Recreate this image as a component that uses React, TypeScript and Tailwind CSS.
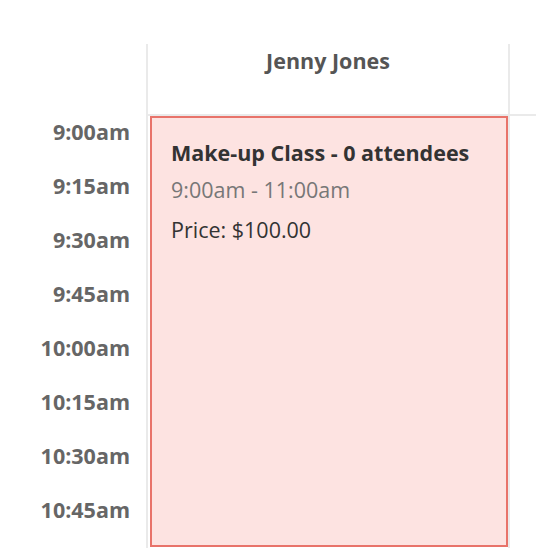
import React from "react";

const times = ["9:00am", "9:15am", "9:30am", "9:45am", "10:00am", "10:15am", "10:30am", "10:45am"];

export default function App() {
  return (
    <div
      className="w-[536px] h-[556px] overflow-hidden bg-white pt-[44px]"
      style={{ fontFamily: '"Open Sans", "Liberation Sans", sans-serif' }}
    >
      <div className="flex">
        {/* time column */}
        <div className="w-[146px] shrink-0">
          <div className="h-[72px]" />
          {times.map((t) => (
            <div key={t} className="h-[54px] pr-[16px] pt-[2px] text-right text-[21.5px] leading-[28px] font-bold text-[#666666]">
              {t}
            </div>
          ))}
        </div>
        {/* Jenny column */}
        <div className="w-[364px] shrink-0 border-x-2 border-[#eaeaea]">
          <div className="h-[72px] border-b-2 border-[#eaeaea] pt-[3px] text-center text-[21.5px] leading-[28px] font-bold text-[#555555]">
            Jenny Jones
          </div>
          <div className="pl-[2px]">
            <div className="h-[431px] border-2 border-[#e8736a] bg-[#fde3e1] pl-[19px] pt-[21px]">
              <div className="text-[21.5px] leading-[28px] font-bold text-[#333333]">Make-up Class - 0 attendees</div>
              <div className="mt-[9px] text-[21.5px] leading-[28px] text-[#777777]">9:00am - 11:00am</div>
              <div className="mt-[12px] text-[21.5px] leading-[28px] text-[#333333]">Price: $100.00</div>
            </div>
          </div>
        </div>
        <div className="flex-1">
          <div className="h-[72px] border-b-2 border-[#eaeaea]" />
        </div>
      </div>
    </div>
  );
}
